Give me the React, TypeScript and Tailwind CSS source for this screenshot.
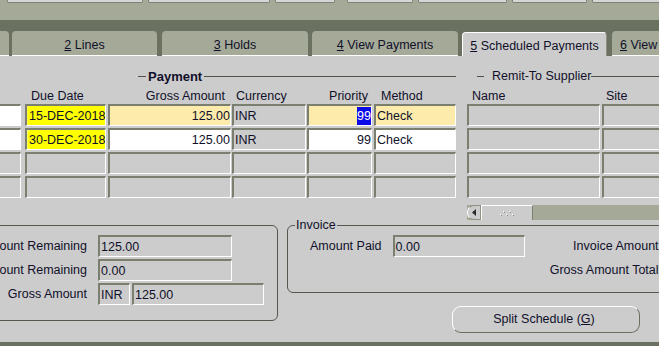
import React from 'react'

type Fill = 'w' | 'y' | 'g'
type Cell = { t?: string; fill: Fill; right?: boolean; hl?: boolean; sel?: boolean }

const font = "font-['Liberation_Sans',Arial,sans-serif] text-[12.5px] text-[#10102a]"
const cols = ['ml-[-10px] w-[31px]', 'ml-[4px] w-[81px]', 'ml-[2px] w-[123px]', 'ml-[1px] w-[74px]', 'ml-[1px] w-[65px]', 'ml-[2px] w-[82px]', 'ml-[11px] w-[133px]', 'ml-[2px] w-[80px]']
const fills: Record<Fill, string> = { w: 'bg-white', y: 'bg-[#fcebab]', g: 'bg-[#cccccc]' }
const bevel = 'border-t-2 border-l-2 border-b border-r border-t-[#7b7f6f] border-l-[#7b7f6f] border-b-white border-r-white'

const gray: Cell[] = cols.map(() => ({ fill: 'g' as Fill }))
const rows: Cell[][] = [
  [{ fill: 'w' }, { t: '15-DEC-2018', fill: 'y', hl: true }, { t: '125.00', fill: 'y', right: true }, { t: 'INR', fill: 'g' }, { t: '99', fill: 'y', right: true, sel: true }, { t: 'Check', fill: 'y' }, { fill: 'g' }, { fill: 'g' }],
  [{ fill: 'w' }, { t: '30-DEC-2018', fill: 'w', hl: true }, { t: '125.00', fill: 'w', right: true }, { t: 'INR', fill: 'g' }, { t: '99', fill: 'w', right: true }, { t: 'Check', fill: 'w' }, { fill: 'g' }, { fill: 'g' }],
  gray,
  gray,
]
const heads = [
  { t: '', c: '' },
  { t: 'Due Date', c: 'pl-[6px]' },
  { t: 'Gross Amount', c: 'justify-end pr-[6px]' },
  { t: 'Currency', c: 'pl-[4px]' },
  { t: 'Priority', c: 'justify-end pr-[4px]' },
  { t: 'Method', c: 'pl-[7px]' },
  { t: 'Name', c: 'pl-[5px]' },
  { t: 'Site', c: 'pl-[4px]' },
]
const stubs = ['ml-[7px] w-[136px]', 'ml-[5px] w-[122px]', 'ml-[5px] w-[60px]', 'ml-[12px] w-[66px]', 'ml-[5px] w-[89px]', 'ml-[5px] w-[75px]', 'ml-[5px] w-[80px]']

function Field({ cls, children }: { cls: string; children?: React.ReactNode }) {
  return <div className={`${cls} h-[22px] shrink-0 ${bevel} bg-[#cccccc] flex items-center pl-[1px] pt-[1px]`}>{children}</div>
}

function Tab({ cls, n, label }: { cls: string; n: string; label: string }) {
  return (
    <div className={`${cls} h-[25px] shrink-0 bg-[#a5aa98] rounded-t-[4px] border-b border-white flex items-center justify-center pt-[4px] whitespace-nowrap`}>
      <span className="underline">{n}</span>&nbsp;{label}
    </div>
  )
}

export default function App() {
  return (
    <div className={`${font} w-[659px] h-[346px] overflow-hidden flex flex-col bg-[#cccccc]`}>
      <div className="h-[20px] shrink-0 bg-[#a5aa98] flex items-start">
        {stubs.map((s, i) => <div key={i} className={`${s} shrink-0 h-[3px] bg-[#d6d6d6] border-x border-b border-[#7e8276] rounded-b-[2px]`} />)}
      </div>
      <div className="h-[11px] shrink-0 bg-[#6b7160]" />
      <div className="h-[25px] shrink-0 bg-[#6b7160] flex items-end">
        <div className="ml-[-40px] w-[49px] h-[25px] shrink-0 bg-[#a5aa98] rounded-t-[4px] border-b border-white" />
        <Tab cls="ml-[3px] w-[145px]" n="2" label="Lines" />
        <Tab cls="ml-[5px] w-[146px]" n="3" label="Holds" />
        <Tab cls="ml-[4px] w-[146px]" n="4" label="View Payments" />
        <div className="ml-[4px] w-[145px] h-[24px] shrink-0 bg-[#cccccc] rounded-t-[4px] border-t border-l border-white border-r border-r-[#8d917f] flex items-center justify-center pt-[3px] whitespace-nowrap">
          <span className="underline">5</span>&nbsp;Scheduled Payments
        </div>
        <div className="ml-[5px] w-[145px] h-[25px] shrink-0 bg-[#a5aa98] rounded-t-[4px] border-b border-white flex items-center pl-[8px] pt-[4px] whitespace-nowrap">
          <span className="underline">6</span>&nbsp;View Approvals
        </div>
      </div>

      <div className="flex-1 flex flex-col">
        <div className="mt-[12px] h-[16px] flex items-center">
          <div className="ml-[138px] w-[318px] shrink-0 flex items-center">
            <div className="w-[8px] h-px bg-[#4f5249]" />
            <span className="px-[2px] pt-[1px] font-bold text-[13px]">Payment</span>
            <div className="flex-1 h-px bg-[#4f5249]" />
          </div>
          <div className="ml-[21px] flex-1 flex items-center">
            <div className="w-[7px] h-px bg-[#4f5249]" />
            <span className="pl-[8px] pt-[1px]">Remit-To Supplier</span>
            <div className="flex-1 h-px bg-[#4f5249]" />
          </div>
        </div>
        <div className="mt-[4px] h-[16px] flex">
          {heads.map((h, i) => <div key={i} className={`${cols[i]} shrink-0 flex items-center whitespace-nowrap ${h.c}`}>{h.t}</div>)}
        </div>
        <div className="flex flex-col gap-[2px]">
          {rows.map((r, ri) => (
            <div key={ri} className="flex">
              {r.map((c, i) => (
                <div key={i} className={`${cols[i]} h-[22px] shrink-0 ${bevel} ${fills[c.fill]} flex items-center overflow-hidden whitespace-nowrap ${c.right ? 'justify-end' : 'pl-[1px]'}`}>
                  {c.hl ? (
                    <span className="w-full h-[20px] bg-[#ffff00] shadow-[0_0_3px_1px_#ffff00] rounded-[3px] flex items-center pl-[1px] pt-[1px]">{c.t}</span>
                  ) : c.sel ? (
                    <span className="bg-[#0b0be8] text-white h-[18px] flex items-center pt-[1px]">{c.t}</span>
                  ) : <span className="pt-[1px]">{c.t}</span>}
                </div>
              ))}
            </div>
          ))}
        </div>

        <div className="mt-[7px] ml-[467px] w-[200px] h-[15px] flex bg-[#a5aa98]">
          <div className="w-[14px] h-[15px] bg-[#cccccc] border border-[#8d917f] rounded-l-[7px] border-l-white flex items-center justify-center">
            <svg width="4" height="7" viewBox="0 0 4 7"><path d="M4 0L0 3.5L4 7Z" fill="#2a2a2a" /></svg>
          </div>
          <div className="w-[52px] h-[15px] bg-[#cccccc] border-t border-l border-white border-r border-r-[#7b7f6f] flex items-center justify-center">
            <svg width="18" height="7" viewBox="0 0 18 7">
              <g fill="#ffffff"><rect x="5" y="1" width="1" height="1" /><rect x="11" y="1" width="1" height="1" /><rect x="2" y="4" width="1" height="1" /><rect x="8" y="4" width="1" height="1" /><rect x="14" y="4" width="1" height="1" /></g>
              <g fill="#8d917f"><rect x="6" y="2" width="1" height="1" /><rect x="12" y="2" width="1" height="1" /><rect x="3" y="5" width="1" height="1" /><rect x="9" y="5" width="1" height="1" /><rect x="15" y="5" width="1" height="1" /></g>
            </svg>
          </div>
        </div>

        <div className="mt-[5px] flex items-start">
          <div className="ml-[-50px] w-[328px] h-[96px] shrink-0 border border-[#55584f] rounded-[6px] pt-[9px] flex flex-col gap-[2px]">
            <div className="flex items-center">
              <span className="w-[136px] flex justify-end whitespace-nowrap pt-[1px]">Amount Remaining</span>
              <Field cls="ml-[11px] w-[134px]">125.00</Field>
            </div>
            <div className="flex items-center">
              <span className="w-[136px] flex justify-end whitespace-nowrap pt-[1px]">Discount Amount Remaining</span>
              <Field cls="ml-[11px] w-[134px]">0.00</Field>
            </div>
            <div className="flex items-center">
              <span className="w-[136px] flex justify-end whitespace-nowrap pt-[1px]">Gross Amount</span>
              <Field cls="ml-[11px] w-[32px]">INR</Field>
              <Field cls="ml-[2px] w-[132px]">125.00</Field>
            </div>
          </div>

          <div className="ml-[9px] flex flex-col shrink-0">
            <div className="relative w-[400px] h-[68px] border border-[#55584f] rounded-[6px] pt-[9px] flex">
              <span className="absolute left-[7px] top-[-9px] px-[1px] bg-[#cccccc] leading-[16px]">Invoice</span>
              <span className="ml-[22px] h-[22px] flex items-center whitespace-nowrap pt-[1px]">Amount Paid</span>
              <Field cls="ml-[11px] w-[132px]">0.00</Field>
              <div className="ml-[17px] w-[117px] flex flex-col items-end gap-[2px]">
                <span className="h-[22px] flex items-center whitespace-nowrap pt-[1px]">Invoice Amount</span>
                <span className="h-[22px] flex items-center whitespace-nowrap pt-[1px]">Gross Amount Total</span>
              </div>
            </div>
            <button className="ml-[165px] mt-[13px] w-[188px] h-[27px] rounded-[9px] border border-white border-r-[#6b7160] border-b-[#6b7160] bg-[#cccccc] flex items-center justify-center pb-[1px] pr-[4px]">
              Split Schedule (<span className="underline">G</span>)
            </button>
          </div>
        </div>
      </div>
      <div className="h-[4px] shrink-0 bg-[#6b7160]" />
    </div>
  )
}
